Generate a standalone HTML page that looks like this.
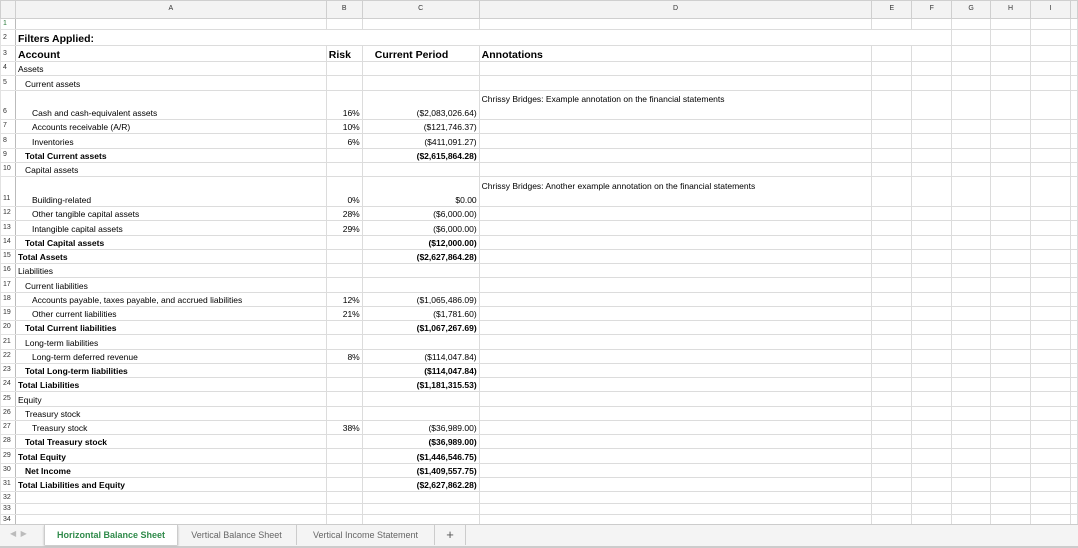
<!DOCTYPE html>
<html><head><meta charset="utf-8"><style>
body{margin:0;width:1078px;height:548px;overflow:hidden;background:#fff;font-family:"Liberation Sans",sans-serif;color:#000;position:relative}
table{border-collapse:collapse;table-layout:fixed;position:absolute;left:0;top:0}
td{border:1px solid #dcdcdc;padding:0 2px 1px 2px;font-size:8.5px;white-space:nowrap;overflow:visible;vertical-align:bottom;line-height:10px}
td.h{background:#f3f3f3;color:#333;text-align:center;vertical-align:middle;font-size:7px;border-color:#cfcfcf}
td.n{background:#fff;color:#333;font-size:7px;text-align:left;padding-left:2px;border-color:#e2e2e2;border-right:1px solid #bbb;vertical-align:bottom;padding-bottom:2px}
.b{font-weight:bold}
.r{text-align:right}
.l1{padding-left:9px}.l2{padding-left:16px}
.big{font-size:10.5px;font-weight:bold}
.tabs{position:absolute;left:0;top:524px;width:1078px;height:24px;background:#f4f4f4;border-top:1px solid #ccc;border-bottom:2px solid #ccc;box-sizing:border-box;font-size:9px;color:#666}
.tab{position:absolute;top:0;height:20px;line-height:20px;text-align:center;border-right:1px solid #ccc}
</style></head><body>
<table>
<colgroup><col style="width:15px"><col style="width:311px"><col style="width:36px"><col style="width:117px"><col style="width:393px"><col style="width:40px"><col style="width:40px"><col style="width:39px"><col style="width:40px"><col style="width:40px"><col style="width:7px"></colgroup>
<tr style="height:18px"><td class="h"></td><td class="h">A</td><td class="h">B</td><td class="h">C</td><td class="h">D</td><td class="h">E</td><td class="h">F</td><td class="h">G</td><td class="h">H</td><td class="h">I</td><td class="h"></td></tr>
<tr style="height:11px"><td class="n" style="color:#2a7a3a;padding-bottom:0">1</td><td></td><td></td><td></td><td></td><td></td><td></td><td></td><td></td><td></td><td></td></tr>
<tr style="height:16px"><td class="n">2</td><td colspan="6" class="big" style="border-right-color:#dcdcdc">Filters Applied:</td><td></td><td></td><td></td><td></td></tr>
<tr style="height:16px"><td class="n">3</td><td class="big">Account</td><td class="big">Risk</td><td class="big" style="padding-left:12px">Current Period</td><td class="big">Annotations</td><td></td><td></td><td></td><td></td><td></td><td></td></tr>
<tr style="height:14px"><td class="n">4</td><td>Assets</td><td></td><td></td><td></td><td></td><td></td><td></td><td></td><td></td><td></td></tr>
<tr style="height:15px"><td class="n">5</td><td class="l1">Current assets</td><td></td><td></td><td></td><td></td><td></td><td></td><td></td><td></td><td></td></tr>
<tr style="height:29px"><td class="n">6</td><td class="l2">Cash and cash-equivalent assets</td><td class="r">16%</td><td class="r">($2,083,026.64)</td><td style="vertical-align:top;padding-top:3px">Chrissy Bridges: Example annotation on the financial statements</td><td></td><td></td><td></td><td></td><td></td><td></td></tr>
<tr style="height:14px"><td class="n">7</td><td class="l2">Accounts receivable (A/R)</td><td class="r">10%</td><td class="r">($121,746.37)</td><td></td><td></td><td></td><td></td><td></td><td></td><td></td></tr>
<tr style="height:15px"><td class="n">8</td><td class="l2">Inventories</td><td class="r">6%</td><td class="r">($411,091.27)</td><td></td><td></td><td></td><td></td><td></td><td></td><td></td></tr>
<tr style="height:14px"><td class="n">9</td><td class="l1 b">Total Current assets</td><td></td><td class="r b">($2,615,864.28)</td><td></td><td></td><td></td><td></td><td></td><td></td><td></td></tr>
<tr style="height:14px"><td class="n">10</td><td class="l1">Capital assets</td><td></td><td></td><td></td><td></td><td></td><td></td><td></td><td></td><td></td></tr>
<tr style="height:30px"><td class="n">11</td><td class="l2">Building-related</td><td class="r">0%</td><td class="r">$0.00</td><td style="vertical-align:top;padding-top:4px">Chrissy Bridges: Another example annotation on the financial statements</td><td></td><td></td><td></td><td></td><td></td><td></td></tr>
<tr style="height:14px"><td class="n">12</td><td class="l2">Other tangible capital assets</td><td class="r">28%</td><td class="r">($6,000.00)</td><td></td><td></td><td></td><td></td><td></td><td></td><td></td></tr>
<tr style="height:15px"><td class="n">13</td><td class="l2">Intangible capital assets</td><td class="r">29%</td><td class="r">($6,000.00)</td><td></td><td></td><td></td><td></td><td></td><td></td><td></td></tr>
<tr style="height:14px"><td class="n">14</td><td class="l1 b">Total Capital assets</td><td></td><td class="r b">($12,000.00)</td><td></td><td></td><td></td><td></td><td></td><td></td><td></td></tr>
<tr style="height:14px"><td class="n">15</td><td class="b">Total Assets</td><td></td><td class="r b">($2,627,864.28)</td><td></td><td></td><td></td><td></td><td></td><td></td><td></td></tr>
<tr style="height:14px"><td class="n">16</td><td>Liabilities</td><td></td><td></td><td></td><td></td><td></td><td></td><td></td><td></td><td></td></tr>
<tr style="height:15px"><td class="n">17</td><td class="l1">Current liabilities</td><td></td><td></td><td></td><td></td><td></td><td></td><td></td><td></td><td></td></tr>
<tr style="height:14px"><td class="n">18</td><td class="l2">Accounts payable, taxes payable, and accrued liabilities</td><td class="r">12%</td><td class="r">($1,065,486.09)</td><td></td><td></td><td></td><td></td><td></td><td></td><td></td></tr>
<tr style="height:14px"><td class="n">19</td><td class="l2">Other current liabilities</td><td class="r">21%</td><td class="r">($1,781.60)</td><td></td><td></td><td></td><td></td><td></td><td></td><td></td></tr>
<tr style="height:14px"><td class="n">20</td><td class="l1 b">Total Current liabilities</td><td></td><td class="r b">($1,067,267.69)</td><td></td><td></td><td></td><td></td><td></td><td></td><td></td></tr>
<tr style="height:15px"><td class="n">21</td><td class="l1">Long-term liabilities</td><td></td><td></td><td></td><td></td><td></td><td></td><td></td><td></td><td></td></tr>
<tr style="height:14px"><td class="n">22</td><td class="l2">Long-term deferred revenue</td><td class="r">8%</td><td class="r">($114,047.84)</td><td></td><td></td><td></td><td></td><td></td><td></td><td></td></tr>
<tr style="height:14px"><td class="n">23</td><td class="l1 b">Total Long-term liabilities</td><td></td><td class="r b">($114,047.84)</td><td></td><td></td><td></td><td></td><td></td><td></td><td></td></tr>
<tr style="height:14px"><td class="n">24</td><td class="b">Total Liabilities</td><td></td><td class="r b">($1,181,315.53)</td><td></td><td></td><td></td><td></td><td></td><td></td><td></td></tr>
<tr style="height:15px"><td class="n">25</td><td>Equity</td><td></td><td></td><td></td><td></td><td></td><td></td><td></td><td></td><td></td></tr>
<tr style="height:14px"><td class="n">26</td><td class="l1">Treasury stock</td><td></td><td></td><td></td><td></td><td></td><td></td><td></td><td></td><td></td></tr>
<tr style="height:14px"><td class="n">27</td><td class="l2">Treasury stock</td><td class="r">38%</td><td class="r">($36,989.00)</td><td></td><td></td><td></td><td></td><td></td><td></td><td></td></tr>
<tr style="height:14px"><td class="n">28</td><td class="l1 b">Total Treasury stock</td><td></td><td class="r b">($36,989.00)</td><td></td><td></td><td></td><td></td><td></td><td></td><td></td></tr>
<tr style="height:15px"><td class="n">29</td><td class="b">Total Equity</td><td></td><td class="r b">($1,446,546.75)</td><td></td><td></td><td></td><td></td><td></td><td></td><td></td></tr>
<tr style="height:14px"><td class="n">30</td><td class="l1 b">Net Income</td><td></td><td class="r b">($1,409,557.75)</td><td></td><td></td><td></td><td></td><td></td><td></td><td></td></tr>
<tr style="height:14px"><td class="n">31</td><td class="b">Total Liabilities and Equity</td><td></td><td class="r b">($2,627,862.28)</td><td></td><td></td><td></td><td></td><td></td><td></td><td></td></tr>
<tr style="height:12px"><td class="n" style="padding-bottom:0">32</td><td></td><td></td><td></td><td></td><td></td><td></td><td></td><td></td><td></td><td></td></tr>
<tr style="height:10px"><td class="n" style="padding-bottom:0">33</td><td></td><td></td><td></td><td></td><td></td><td></td><td></td><td></td><td></td><td></td></tr>
<tr style="height:11px"><td class="n" style="padding-bottom:0">34</td><td></td><td></td><td></td><td></td><td></td><td></td><td></td><td></td><td></td><td></td></tr>
</table>
<div class="tabs">
<div style="position:absolute;left:10px;top:4px;color:#bbb;font-size:8px">◀ &nbsp;▶</div>
<div class="tab" style="left:44px;width:132px;background:#fff;color:#2f8a4a;font-weight:bold;border-left:1px solid #ccc;box-shadow:0 1px 2px #bbb">Horizontal Balance Sheet</div>
<div class="tab" style="left:177px;width:119px">Vertical Balance Sheet</div>
<div class="tab" style="left:297px;width:137px">Vertical Income Statement</div>
<div class="tab" style="left:435px;width:30px;font-size:13px;color:#555">+</div>
</div>
</body></html>
